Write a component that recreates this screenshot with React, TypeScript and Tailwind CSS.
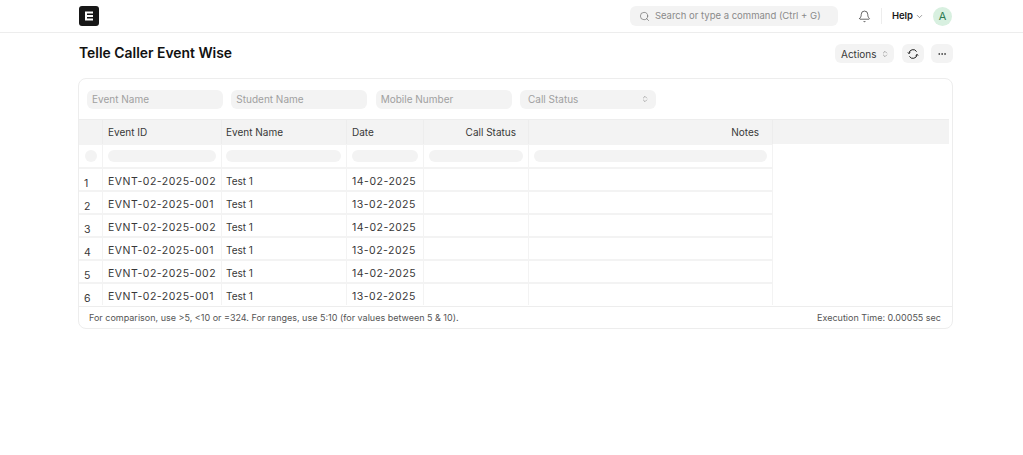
import { Bell, ChevronDown, ChevronsUpDown, Ellipsis, Search } from "lucide-react";

const columns = [
  { label: "", w: "w-[24px]", align: "", pad: "px-[5px]" },
  { label: "Event ID", w: "w-[119px]", align: "", pad: "px-[5px]" },
  { label: "Event Name", w: "w-[125px]", align: "", pad: "pl-[4px] pr-[5px]" },
  { label: "Date", w: "w-[77px]", align: "", pad: "px-[5px]" },
  { label: "Call Status", w: "w-[105px]", align: "justify-end", pad: "pl-[5px] pr-[12px]" },
  { label: "Notes", w: "w-[244px]", align: "justify-end", pad: "pl-[5px] pr-[13px]" },
];

const rows = [
  ["1", "EVNT-02-2025-002", "Test 1", "14-02-2025"],
  ["2", "EVNT-02-2025-001", "Test 1", "13-02-2025"],
  ["3", "EVNT-02-2025-002", "Test 1", "14-02-2025"],
  ["4", "EVNT-02-2025-001", "Test 1", "13-02-2025"],
  ["5", "EVNT-02-2025-002", "Test 1", "14-02-2025"],
  ["6", "EVNT-02-2025-001", "Test 1", "13-02-2025"],
];

function FilterBox({ label }: { label: string }) {
  return (
    <div className="flex h-[19px] w-[136px] items-center rounded-[6px] bg-[#f3f3f3] px-[5px] text-[10px] text-[#a0a0a0]">
      {label}
    </div>
  );
}

export default function App() {
  return (
    <div className="h-[455px] w-[1023px] overflow-hidden bg-white text-[#383838] [font-family:Inter,sans-serif]">
      <header className="flex h-[33px] items-center border-b border-[#ededed] pl-[79px] pr-[71px]">
        <svg width="20" height="20" viewBox="0 0 20 20" aria-label="Logo">
          <rect width="20" height="20" rx="3" fill="#171717" />
          <path d="M6 5.5h8v2H8v1.6h6v1.8H8v1.6h6v2H6z" fill="#fff" />
        </svg>
        <div className="ml-auto flex h-[20px] w-[208px] items-center gap-[5px] whitespace-nowrap rounded-[6px] bg-[#f3f3f3] pl-[9px] text-[9.5px] text-[#8a8a8a]">
          <Search size={11} strokeWidth={1.25} className="shrink-0 text-[#555]" />
          <span>Search or type a command (Ctrl + G)</span>
        </div>
        <Bell size={13} strokeWidth={1.25} className="ml-[20px] text-[#222]" />
        <div className="ml-[10px] h-[16px] w-px bg-[#ededed]" />
        <span className="ml-[10px] text-[9.5px] font-semibold text-[#171717]">Help</span>
        <ChevronDown size={9} strokeWidth={1.25} className="ml-[2px] text-[#333]" />
        <div className="ml-[9px] flex h-[19px] w-[19px] items-center justify-center rounded-full bg-[#d8f0e0] text-[11px] text-[#2b7a50]">
          A
        </div>
      </header>

      <div className="flex h-[45px] items-center justify-between pb-[4px] pl-[79px] pr-[70px]">
        <h1 className="text-[13.9px] font-semibold leading-none text-[#111]">Telle Caller Event Wise</h1>
        <div className="flex items-center gap-[7.5px]">
          <div className="flex h-[19px] w-[59px] items-center gap-[4px] rounded-[6px] bg-[#f3f3f3] pl-[6px] text-[10px] text-[#383838]">
            <span className="pt-[1px]">Actions</span>
            <ChevronsUpDown size={8} strokeWidth={1.25} className="text-[#444]" />
          </div>
          <div className="flex h-[19px] w-[22px] items-center justify-center rounded-[6px] bg-[#f3f3f3]">
            <svg width="12" height="12" viewBox="0 0 12 12" fill="none" stroke="#222" strokeWidth="1">
              <path d="M2 5.4A4.1 4.1 0 0 1 9.6 3.6" />
              <path d="M10 6.6A4.1 4.1 0 0 1 2.4 8.4" />
              <path d="M0.9 4.4L2 5.7L3.1 4.4" />
              <path d="M8.9 7.6L10 6.3L11.1 7.6" />
            </svg>
          </div>
          <div className="flex h-[19px] w-[22px] items-center justify-center rounded-[6px] bg-[#f3f3f3]">
            <Ellipsis size={10} strokeWidth={1.75} className="text-[#222]" />
          </div>
        </div>
      </div>

      <main className="ml-[78px] h-[251px] w-[875px] overflow-hidden rounded-[8px] border border-[#ededed]">
        <div className="flex h-[40px] items-center gap-[8.33px] pl-[8px]">
          <FilterBox label="Event Name" />
          <FilterBox label="Student Name" />
          <FilterBox label="Mobile Number" />
          <div className="flex h-[19px] w-[136px] items-center justify-between rounded-[6px] bg-[#f3f3f3] pl-[8px] pr-[7px] text-[10px] text-[#a0a0a0]">
            Call Status
            <ChevronsUpDown size={8} strokeWidth={1.25} className="text-[#555]" />
          </div>
        </div>

        <div className="h-[187px] w-[870px] border-t border-[#ededed]">
          <div className="flex h-[24px] bg-[#f3f3f3]">
            {columns.map((c, i) => (
              <div
                key={i}
                className={`flex h-full items-center border-r border-[#ededed] pt-[1px] text-[10px] ${c.w} ${c.align} ${c.pad}`}
              >
                {c.label}
              </div>
            ))}
          </div>
          <div className="flex h-[25px] w-fit border-b-2 border-t border-[#f3f3f3]">
            {columns.map((c, i) => (
              <div
                key={i}
                className={`flex h-full items-center border-r border-[#f3f3f3] ${c.w} ${
                  i === 0 ? "pl-[6px]" : i === 2 ? "pl-[4px] pr-[5px]" : "px-[5px]"
                }`}
              >
                <div className={`h-[12px] bg-[#f3f3f3] ${i === 0 ? "w-[12px] rounded-full" : "w-full rounded-[6px]"}`} />
              </div>
            ))}
          </div>
          {rows.map((r, ri) => (
            <div
              key={ri}
              className={`flex h-[23px] w-fit border-b-2 ${ri < 5 ? "border-[#f3f3f3]" : "border-transparent"}`}
            >
              {columns.map((c, i) => (
                <div
                  key={i}
                  className={`flex h-full items-center whitespace-nowrap border-r border-[#f3f3f3] text-[10.5px] ${c.w} ${c.pad} ${
                    i === 0 ? "pt-[8px]" : "pt-[4px]"
                  } ${i === 2 ? "text-[10px]" : "tracking-[0.5px]"} ${i === 0 ? "tracking-normal" : ""}`}
                >
                  {r[i] ?? ""}
                </div>
              ))}
            </div>
          ))}
        </div>

        <footer className="flex h-[23px] items-center justify-between border-t border-[#ededed] pl-[10px] pr-[11px] text-[9px] text-[#555]">
          <span>For comparison, use &gt;5, &lt;10 or =324. For ranges, use 5:10 (for values between 5 &amp; 10).</span>
          <span>Execution Time: 0.00055 sec</span>
        </footer>
      </main>
    </div>
  );
}
